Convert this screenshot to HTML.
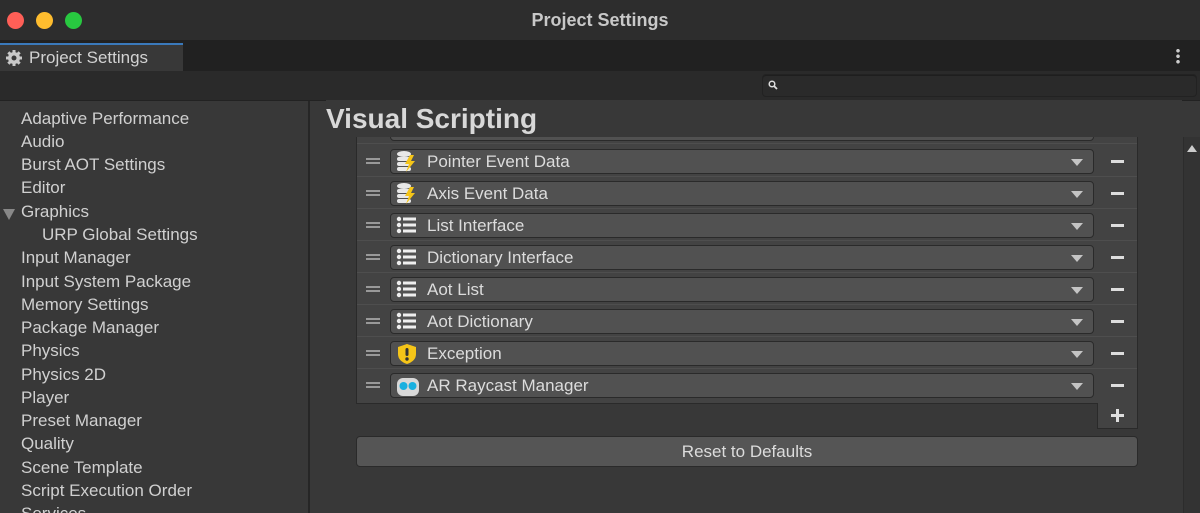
<!DOCTYPE html>
<html style="overflow:hidden;width:1200px;height:513px"><head><style>
*{margin:0;padding:0;box-sizing:border-box}
body{width:1200px;height:513px;overflow:hidden;background:#383838;font-family:"Liberation Sans",sans-serif;color:#d2d2d2;position:relative}
.abs{position:absolute}
.title{left:0;top:0;width:1200px;height:40px;background:#2d2d2d;text-align:center;line-height:40px;font-size:18px;font-weight:bold;color:#c8c8c8}
.dot{top:12px;width:17px;height:17px;border-radius:50%}
.tabrow{left:0;top:40px;width:1200px;height:31px;background:#212121}
.tab{left:0;top:43px;width:183px;height:28px;background:#383838;border-top:2px solid #3a79bb;font-size:17px;line-height:26px;padding-left:29px}
.tool{left:0;top:71px;width:1200px;height:30px;background:#2a2a2a;border-bottom:1px solid #222}
.search{left:762px;top:74px;width:435px;height:23px;background:#2a2a2a;border:1px solid #222;border-radius:4px;box-shadow:inset 0 1px 0 #1e1e1e}
.left{left:0;top:101px;width:310px;height:412px;background:#383838;border-right:2px solid #262626;overflow:hidden}
.li{position:absolute;left:21px;font-size:17px;color:#d0d0d0;white-space:nowrap}
.h{left:326px;top:103px;font-size:28px;font-weight:bold;color:#d8d8d8}
.box{left:356px;top:130px;width:782px;height:274px;background:#434343;border:1px solid #2a2a2a;border-top:none}
.row{position:absolute;left:0;width:780px;height:32px;border-bottom:1px solid #4e4e4e}
.grip{position:absolute;left:9px;top:13px;width:14px;height:6px;border-top:2px solid #999;border-bottom:2px solid #999}
.field{position:absolute;left:33px;top:4px;width:704px;height:25px;background:#515151;border:1px solid #2a2a2a;border-radius:4px;font-size:17px;line-height:23px;padding-left:36px;color:#dcdcdc}
.arr{position:absolute;right:10px;top:9px;width:0;height:0;border-left:6px solid transparent;border-right:6px solid transparent;border-top:7px solid #c4c4c4}
.minus{position:absolute;left:754px;top:15px;width:13px;height:3px;background:#ddd}
</style></head><body>
<div class="abs title">Project Settings</div>
<div class="abs dot" style="left:7px;background:#fe5f57"></div>
<div class="abs dot" style="left:36px;background:#febc2e"></div>
<div class="abs dot" style="left:65px;background:#28c840"></div>
<div class="abs tabrow"></div>
<div class="abs tab">Project Settings</div>
<svg class="abs" style="left:5px;top:49px" width="18" height="18" viewBox="0 0 18 18"><g fill="#c8c8c8"><circle cx="9" cy="9" r="6"/><rect x="7.5" y="1" width="3" height="16"/><rect x="1" y="7.5" width="16" height="3"/><rect x="7.5" y="1" width="3" height="16" transform="rotate(45 9 9)"/><rect x="7.5" y="1" width="3" height="16" transform="rotate(-45 9 9)"/></g><circle cx="9" cy="9" r="2.5" fill="#383838"/></svg>
<div class="abs" style="left:1176px;top:48px;width:4px;height:16px;background:radial-gradient(circle,#ccc 1.6px,transparent 2px) 0 0/4px 5.5px"></div>
<div class="abs tool"></div>
<div class="abs search"></div>
<svg class="abs" style="left:768px;top:80px" width="10" height="10"><circle cx="4" cy="4" r="2.8" stroke="#ddd" stroke-width="1.5" fill="none"/><line x1="6" y1="6" x2="9" y2="9" stroke="#ddd" stroke-width="1.8"/></svg>
<div class="abs left">
<div class="li" style="top:8px">Adaptive Performance</div>
<div class="li" style="top:31px">Audio</div>
<div class="li" style="top:54px">Burst AOT Settings</div>
<div class="li" style="top:77px">Editor</div>
<div class="li" style="top:101px">Graphics</div>
<div class="abs" style="left:3px;top:108px;border-left:6px solid transparent;border-right:6px solid transparent;border-top:11px solid #888"></div>
<div class="li" style="top:124px;left:42px">URP Global Settings</div>
<div class="li" style="top:147px">Input Manager</div>
<div class="li" style="top:171px">Input System Package</div>
<div class="li" style="top:194px">Memory Settings</div>
<div class="li" style="top:217px">Package Manager</div>
<div class="li" style="top:240px">Physics</div>
<div class="li" style="top:264px">Physics 2D</div>
<div class="li" style="top:287px">Player</div>
<div class="li" style="top:310px">Preset Manager</div>
<div class="li" style="top:333px">Quality</div>
<div class="li" style="top:357px">Scene Template</div>
<div class="li" style="top:380px">Script Execution Order</div>
<div class="li" style="top:403px">Services</div>
</div>
<div class="abs" style="left:1183px;top:137px;width:17px;height:376px;background:#333;border-left:1px solid #2c2c2c"></div>
<div class="abs" style="left:1187px;top:145px;border-left:5px solid transparent;border-right:5px solid transparent;border-bottom:7px solid #ccc"></div>
<div class="abs box">
<div class="row" style="top:-18px"><div class="field"></div></div>
<div class="row" style="top:15px"><div class="grip"></div><div class="field">Pointer Event Data<div class="arr"></div></div><div class="minus"></div></div>
<div class="row" style="top:47px"><div class="grip"></div><div class="field">Axis Event Data<div class="arr"></div></div><div class="minus"></div></div>
<div class="row" style="top:79px"><div class="grip"></div><div class="field">List Interface<div class="arr"></div></div><div class="minus"></div></div>
<div class="row" style="top:111px"><div class="grip"></div><div class="field">Dictionary Interface<div class="arr"></div></div><div class="minus"></div></div>
<div class="row" style="top:143px"><div class="grip"></div><div class="field">Aot List<div class="arr"></div></div><div class="minus"></div></div>
<div class="row" style="top:175px"><div class="grip"></div><div class="field">Aot Dictionary<div class="arr"></div></div><div class="minus"></div></div>
<div class="row" style="top:207px"><div class="grip"></div><div class="field">Exception<div class="arr"></div></div><div class="minus"></div></div>
<div class="row" style="top:239px;border:none"><div class="grip"></div><div class="field">AR Raycast Manager<div class="arr"></div></div><div class="minus"></div></div>
</div>
<svg class="abs" style="left:395px;top:150px" width="26" height="24"><g fill="#e8e8e8"><ellipse cx="9" cy="4" rx="7" ry="3"/><rect x="2" y="7" width="14" height="4" rx="2"/><rect x="2" y="12" width="14" height="4" rx="2"/><rect x="2" y="17" width="14" height="4" rx="2"/></g><path d="M15 5 L10 14 L14 14 L11 22 L20 11 L16 11 L19 5Z" fill="#f5c518"/></svg>
<svg class="abs" style="left:395px;top:182px" width="26" height="24"><g fill="#e8e8e8"><ellipse cx="9" cy="4" rx="7" ry="3"/><rect x="2" y="7" width="14" height="4" rx="2"/><rect x="2" y="12" width="14" height="4" rx="2"/><rect x="2" y="17" width="14" height="4" rx="2"/></g><path d="M15 5 L10 14 L14 14 L11 22 L20 11 L16 11 L19 5Z" fill="#f5c518"/></svg>
<svg class="abs" style="left:396px;top:216px" width="22" height="20"><g fill="#eee"><circle cx="3" cy="3" r="2.2"/><circle cx="3" cy="9" r="2.2"/><circle cx="3" cy="15" r="2.2"/><rect x="7" y="1.5" width="13" height="3"/><rect x="7" y="7.5" width="13" height="3"/><rect x="7" y="13.5" width="13" height="3"/></g></svg>
<svg class="abs" style="left:396px;top:248px" width="22" height="20"><g fill="#eee"><circle cx="3" cy="3" r="2.2"/><circle cx="3" cy="9" r="2.2"/><circle cx="3" cy="15" r="2.2"/><rect x="7" y="1.5" width="13" height="3"/><rect x="7" y="7.5" width="13" height="3"/><rect x="7" y="13.5" width="13" height="3"/></g></svg>
<svg class="abs" style="left:396px;top:280px" width="22" height="20"><g fill="#eee"><circle cx="3" cy="3" r="2.2"/><circle cx="3" cy="9" r="2.2"/><circle cx="3" cy="15" r="2.2"/><rect x="7" y="1.5" width="13" height="3"/><rect x="7" y="7.5" width="13" height="3"/><rect x="7" y="13.5" width="13" height="3"/></g></svg>
<svg class="abs" style="left:396px;top:312px" width="22" height="20"><g fill="#eee"><circle cx="3" cy="3" r="2.2"/><circle cx="3" cy="9" r="2.2"/><circle cx="3" cy="15" r="2.2"/><rect x="7" y="1.5" width="13" height="3"/><rect x="7" y="7.5" width="13" height="3"/><rect x="7" y="13.5" width="13" height="3"/></g></svg>
<svg class="abs" style="left:397px;top:343px" width="22" height="22"><path d="M10 1 L19 4 L19 11 Q19 18 10 21 Q1 18 1 11 L1 4Z" fill="#f5c518"/><rect x="8.5" y="5" width="3" height="8" rx="1.5" fill="#333"/><circle cx="10" cy="16" r="1.7" fill="#333"/></svg>
<svg class="abs" style="left:396px;top:376px" width="24" height="22"><rect x="1" y="2" width="22" height="18" rx="6" fill="#d8d8d8"/><circle cx="7.5" cy="10" r="4" fill="#18b0e0"/><circle cx="16.5" cy="10" r="4" fill="#18b0e0"/></svg>
<div class="abs" style="left:1097px;top:403px;width:41px;height:26px;background:#434343;border:1px solid #2a2a2a;border-top:none"></div>
<div class="abs" style="left:1111px;top:414px;width:13px;height:3px;background:#ddd"></div>
<div class="abs" style="left:1116px;top:409px;width:3px;height:13px;background:#ddd"></div>
<div class="abs" style="left:326px;top:100px;width:856px;height:37px;background:#383838"></div>
<div class="abs h">Visual Scripting</div>
<div class="abs" style="left:356px;top:436px;width:782px;height:31px;background:#555;border:1px solid #2a2a2a;border-radius:4px;text-align:center;line-height:29px;font-size:17px;color:#dcdcdc">Reset to Defaults</div>
</body></html>
